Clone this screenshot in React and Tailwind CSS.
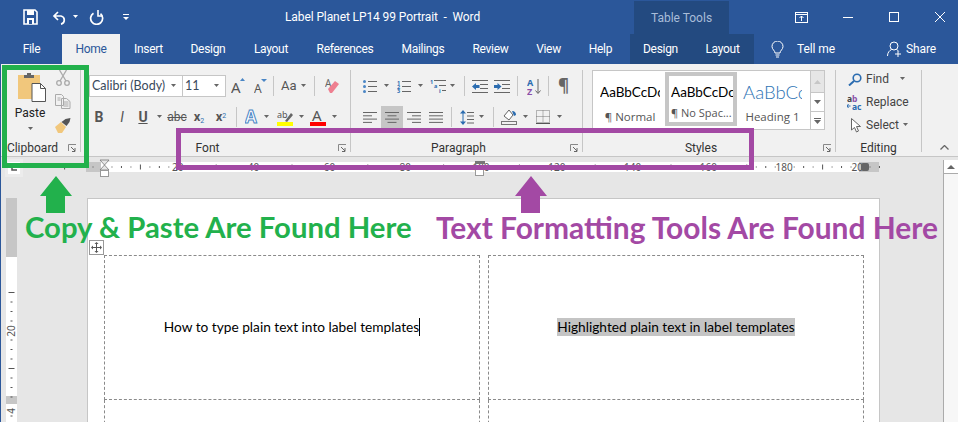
import React from "react";

const Caret = ({ className = "", color = "#666" }) => (
  <svg width="7" height="4" viewBox="0 0 7 4" className={"shrink-0 " + className}>
    <path d="M1 0h5L3.5 3z" fill={color} />
  </svg>
);
const Sep = ({ className = "" }) => <div className={"w-px h-[20px] shrink-0 bg-[#c6c6c6] " + className} />;

const Launcher = () => (
  <div className="w-[16px] flex justify-center shrink-0">
    <svg width="9" height="9" viewBox="0 0 9 9">
      <path d="M.5 7V.5H8" fill="none" stroke="#888" />
      <path d="M3 3l4 4M7 4v3.5H4" fill="none" stroke="#666" />
    </svg>
  </div>
);

const Group = ({ w, label, launcher = true, children }) => (
  <div className={"h-[82px] shrink-0 border-r border-[#c6c6c6] flex flex-col " + w}>
    <div className="h-[72px] shrink-0">{children}</div>
    <div className="h-[12px] shrink-0 flex items-center text-[12px] leading-[12px] text-[#333]">
      <span className="flex-1 text-center">{label}</span>
      {launcher && <Launcher />}
    </div>
  </div>
);

const Lines = ({ rows, className = "" }) => (
  <svg width="14" height="11" viewBox="0 0 14 11" className={"shrink-0 " + className}>
    {rows.map(([x, l], i) => (
      <rect key={i} x={x} y={i * 3.3} width={l} height="1" fill="#666" />
    ))}
  </svg>
);
const ALeft = [[0, 14], [0, 9], [0, 14], [0, 9]];
const ACenter = [[0, 14], [2.5, 9], [0, 14], [2.5, 9]];
const ARight = [[0, 14], [5, 9], [0, 14], [5, 9]];
const AJust = [[0, 14], [0, 14], [0, 14], [0, 14]];

const Tab = ({ w, children, active }) => (
  <div
    className={
      "h-[30px] flex items-center justify-center shrink-0 text-[12px] tracking-[-0.3px] " +
      w +
      (active ? " bg-[#f1f1f1] text-[#2b579a]" : " text-white")
    }
  >
    {children}
  </div>
);

function TitleBar() {
  return (
    <div className="h-[34px] flex items-center shrink-0">
      <svg width="15" height="16" viewBox="0 0 15 16" className="ml-[22px] shrink-0">
        <path d="M1 1h11l2 2v12H1z" fill="none" stroke="#fff" strokeWidth="1.6" />
        <rect x="4" y="1" width="7" height="5" fill="#fff" />
        <rect x="4" y="9" width="7" height="6" fill="#fff" />
        <rect x="6" y="11" width="3" height="4" fill="#2b579a" />
      </svg>
      <svg width="15" height="15" viewBox="0 0 15 15" className="ml-[14px] shrink-0">
        <path d="M6 2L2 6l4 4M2 6h7a4.2 4.2 0 0 1 0 8.2" fill="none" stroke="#fff" strokeWidth="1.7" />
      </svg>
      <Caret color="#fff" className="ml-[5px]" />
      <svg width="15" height="15" viewBox="0 0 15 15" className="ml-[10px] shrink-0">
        <path d="M4.5 3.2a6 6 0 1 0 7 .5" fill="none" stroke="#fff" strokeWidth="1.7" />
        <path d="M9 0v6h4.5" fill="none" stroke="#fff" strokeWidth="1.6" />
      </svg>
      <svg width="6" height="7" viewBox="0 0 6 7" className="ml-[19px] shrink-0">
        <rect y="0" width="6" height="1" fill="#fff" />
        <path d="M0 3h6L3 6z" fill="#fff" />
      </svg>
      <div className="ml-[156px] w-[349px] shrink-0 text-white text-[12px] tracking-[-0.1px] whitespace-pre">Label Planet LP14 99 Portrait  -  Word</div>
      <div className="w-[95px] h-[33px] mt-px self-start shrink-0 bg-[#234a80] text-[#a9bdd9] text-[12px] flex items-center justify-center">Table Tools</div>
      <svg width="13" height="11" viewBox="0 0 13 11" className="ml-[66px] shrink-0">
        <rect x=".5" y=".5" width="12" height="10" fill="none" stroke="#fff" />
        <path d="M0 2.5h13" stroke="#fff" />
        <path d="M6.5 9V4M4.5 6l2-2 2 2" fill="none" stroke="#fff" />
      </svg>
      <div className="ml-[35px] w-[10px] h-px bg-white shrink-0" />
      <div className="ml-[36px] w-[10px] h-[10px] border border-white shrink-0" />
      <svg width="10" height="10" viewBox="0 0 10 10" className="ml-[36px] shrink-0">
        <path d="M0 0l10 10M10 0L0 10" stroke="#fff" />
      </svg>
    </div>
  );
}

function TabBar() {
  return (
    <div className="h-[30px] flex items-center shrink-0">
      <Tab w="w-[61px]">File</Tab>
      <Tab w="w-[58px]" active>Home</Tab>
      <Tab w="w-[57px]">Insert</Tab>
      <Tab w="w-[62px]">Design</Tab>
      <Tab w="w-[64px]">Layout</Tab>
      <Tab w="w-[84px]">References</Tab>
      <Tab w="w-[72px]">Mailings</Tab>
      <Tab w="w-[63px]">Review</Tab>
      <Tab w="w-[53px]">View</Tab>
      <Tab w="w-[51px]">Help</Tab>
      <div className="w-[4px] shrink-0" />
      <div className="flex bg-[#234a80] shrink-0">
        <Tab w="w-[61px]">Design</Tab>
        <Tab w="w-[63px]">Layout</Tab>
      </div>
      <svg width="13" height="17" viewBox="0 0 13 17" className="ml-[17px] shrink-0">
        <path d="M4 12c0-2.500-3-3.500-3-6.500a5.500 5.500 0 0 1 11 0c0 3-3 4-3 6.500z" fill="none" stroke="#fff" />
        <path d="M4.500 14h4M5 16h3" stroke="#fff" />
      </svg>
      <span className="ml-[13px] w-[39px] shrink-0 whitespace-nowrap text-white text-[12px] tracking-[-0.1px]">Tell me</span>
      <svg width="15" height="16" viewBox="0 0 15 16" className="ml-[51px] shrink-0">
        <circle cx="7" cy="5" r="4" fill="none" stroke="#fff" />
        <path d="M.5 15c0-3.500 2-5.500 4-6.500M9.500 8.500c1 .4 1.600 1 2.200 1.800M8 13h6M11 10v6" fill="none" stroke="#fff" />
      </svg>
      <span className="ml-[4px] text-white text-[12px] tracking-[-0.1px]">Share</span>
    </div>
  );
}

function ClipboardGroup() {
  return (
    <Group w="w-[80px]" label="Clipboard">
      <div className="flex">
        <div className="w-[48px] ml-[5px] flex flex-col items-center shrink-0">
          <svg width="30" height="31" viewBox="0 0 30 31" className="mt-[2px] ml-[4px] shrink-0">
            <path d="M1 3h22v24H1z" fill="#f1c77c" />
            <path d="M7 6V3h3V1h4v2h3v3z" fill="#666" />
            <path d="M15 11.500h8.500l5 5v13H15z" fill="#fff" stroke="#555" />
            <path d="M23.500 11.500v5h5" fill="none" stroke="#555" />
          </svg>
          <span className="mt-[2px] text-[12px] leading-[16px] text-[#222]">Paste</span>
          <Caret className="mt-[6px]" />
        </div>
        <div className="w-[18px] flex flex-col items-center shrink-0">
          <svg width="14" height="16" viewBox="0 0 14 16" className="shrink-0">
            <circle cx="3" cy="13" r="2.300" fill="none" stroke="#aaa" strokeWidth="1.300" />
            <circle cx="11" cy="13" r="2.300" fill="none" stroke="#aaa" strokeWidth="1.300" />
            <path d="M4 11L10.500 0M10 11L3.500 0" stroke="#aaa" strokeWidth="1.300" />
          </svg>
          <svg width="16" height="15" viewBox="0 0 16 15" className="mt-[8px] shrink-0">
            <path d="M.5.500h6l2 2v9H.5zM6.500 4.500h5l3.500 3v7h-8.500z" fill="#f1f1f1" stroke="#aaa" />
            <path d="M2.500 4h3M2.500 6h3M8.500 8h5M8.500 10h5M8.500 12h5" stroke="#aaa" />
          </svg>
          <svg width="16" height="15" viewBox="0 0 16 15" className="mt-[9px] shrink-0">
            <path d="M0 9l6-5 5 5-4 6H3z" fill="#f1c77c" />
            <path d="M6.500 4l4-3 5-1-1 4-3 4z" fill="#555" />
          </svg>
        </div>
      </div>
    </Group>
  );
}

function FontGroup() {
  return (
    <Group w="w-[270px]" label="Font">
      <div className="flex items-center h-[22px] mt-[5px] ml-[8px]">
        <div className="w-[94px] h-[22px] bg-white border border-[#c6c6c6] flex items-center shrink-0 pl-[2px] text-[12.500px] font-['Lato',sans-serif]">
          <span className="flex-1 text-[#3a4a5c]">Calibri (Body)</span>
          <Caret className="mr-[5px]" />
        </div>
        <div className="w-[44px] h-[22px] -ml-px bg-white border border-[#c6c6c6] flex items-center shrink-0 pl-[2px] text-[12.500px] text-[#3a4a5c] font-['Lato',sans-serif]">
          <span className="flex-1">11</span>
          <Caret className="mr-[5px]" />
        </div>
        <svg width="15" height="16" viewBox="0 0 15 16" className="ml-[5px] shrink-0">
          <text x="0" y="15" fontSize="15" fill="#555" fontFamily="Noto Sans">A</text>
          <path d="M9 3l2.500-3L14 3z" fill="#4a86c5" />
        </svg>
        <svg width="13" height="15" viewBox="0 0 13 15" className="ml-[8px] shrink-0">
          <text x="0" y="14" fontSize="12" fill="#555" fontFamily="Noto Sans">A</text>
          <path d="M7 0h6l-3 3z" fill="#4a86c5" />
        </svg>
        <Sep className="ml-[6px]" />
        <span className="ml-[7px] w-[17px] text-[13px] text-[#555] shrink-0 leading-[16px]">Aa</span>
        <Caret className="ml-[2px]" />
        <Sep className="ml-[7px]" />
        <svg width="15" height="16" viewBox="0 0 15 16" className="ml-[10px] shrink-0">
          <text x="0" y="9" fontSize="10" fill="#666" fontFamily="Noto Sans">A</text>
          <path d="M3 11l7-8 4 3-7 9H5z" fill="#ee7f90" />
        </svg>
      </div>
      <div className="flex items-center h-[22px] mt-[9px] ml-[8px] text-[#555]">
        <span className="w-[20px] text-center text-[14px] font-bold shrink-0">B</span>
        <span className="w-[20px] ml-[3px] text-center text-[14px] italic shrink-0">I</span>
        <span className="w-[20px] ml-px text-center text-[14px] font-bold underline shrink-0">U</span>
        <Caret className="ml-[3px]" />
        <span className="w-[20px] ml-[4px] text-center text-[12px] line-through shrink-0">abc</span>
        <span className="w-[20px] ml-[2px] text-center text-[13px] font-bold shrink-0">x<sub className="text-[7px] text-[#2b6cb0] font-normal">2</sub></span>
        <span className="w-[20px] ml-[2px] text-center text-[13px] font-bold shrink-0">x<sup className="text-[7px] text-[#2b6cb0] font-normal">2</sup></span>
        <Sep className="ml-[5px]" />
        <svg width="14" height="16" viewBox="0 0 14 16" className="ml-[8px] shrink-0">
          <text x="0" y="14" fontSize="17" fontWeight="700" fill="#fff" stroke="#4a86c5" strokeWidth="1" fontFamily="Noto Sans">A</text>
        </svg>
        <Caret className="ml-[4px]" />
        <svg width="16" height="17" viewBox="0 0 16 17" className="ml-[7px] shrink-0">
          <text x="0" y="9" fontSize="9" fill="#555" fontFamily="Noto Sans">ab</text>
          <path d="M8 12l6-8 2 2-6 7z" fill="#666" />
          <rect y="13" width="16" height="4" fill="#ffff00" />
        </svg>
        <Caret className="ml-[5px]" />
        <svg width="16" height="17" viewBox="0 0 16 17" className="ml-[5px] shrink-0">
          <text x="2" y="12" fontSize="15" fill="#555" fontFamily="Noto Sans">A</text>
          <rect y="13" width="16" height="4" fill="#ff0000" />
        </svg>
        <Caret className="ml-[5px]" />
      </div>
    </Group>
  );
}

function ParagraphGroup() {
  return (
    <Group w="w-[232px]" label="Paragraph">
      <div className="flex items-center h-[22px] mt-[5px] ml-[12px]">
        <svg width="14" height="13" viewBox="0 0 14 13" className="shrink-0">
          <circle cx="1.500" cy="1.500" r="1.500" fill="#4a86c5" /><circle cx="1.500" cy="6.500" r="1.500" fill="#4a86c5" /><circle cx="1.500" cy="11.500" r="1.500" fill="#4a86c5" />
          <path d="M5 1.500h9M5 6.500h9M5 11.500h9" stroke="#666" />
        </svg>
        <Caret className="ml-[6px]" />
        <svg width="14" height="13" viewBox="0 0 14 13" className="ml-[7px] shrink-0">
          <text x="0" y="4.500" fontSize="5.500" fontWeight="700" fill="#2b6cb0" fontFamily="Noto Sans">1</text>
          <text x="0" y="9" fontSize="5.500" fontWeight="700" fill="#2b6cb0" fontFamily="Noto Sans">2</text>
          <text x="0" y="13" fontSize="5.500" fontWeight="700" fill="#2b6cb0" fontFamily="Noto Sans">3</text>
          <path d="M5 1.500h9M5 6.500h9M5 11.500h9" stroke="#666" />
        </svg>
        <Caret className="ml-[6px]" />
        <svg width="16" height="14" viewBox="0 0 16 14" className="ml-[6px] shrink-0">
          <text x="0" y="4.500" fontSize="5.500" fontWeight="700" fill="#2b6cb0" fontFamily="Noto Sans">1</text>
          <text x="4" y="9" fontSize="5.500" fontWeight="700" fill="#2b6cb0" fontFamily="Noto Sans">a</text>
          <text x="9" y="14" fontSize="5.500" fontWeight="700" fill="#2b6cb0" fontFamily="Noto Sans">i</text>
          <path d="M4 1.500h12M9 6.500h7M12 11.500h4" stroke="#666" />
        </svg>
        <Caret className="ml-[3px]" />
        <Sep className="ml-[8px]" />
        <svg width="16" height="13" viewBox="0 0 16 13" className="ml-[7px] shrink-0">
          <path d="M0 .5h16M8 4.500h8M8 8.500h8M0 12.500h16" stroke="#666" />
          <path d="M0 6.500L4 3v2h3.500v3H4v2z" fill="#2b6cb0" />
        </svg>
        <svg width="16" height="13" viewBox="0 0 16 13" className="ml-[6px] shrink-0">
          <path d="M0 .5h16M8 4.500h8M8 8.500h8M0 12.500h16" stroke="#666" />
          <path d="M7.500 6.500L3.500 3v2H0v3h3.500v2z" fill="#2b6cb0" />
        </svg>
        <Sep className="ml-[7px]" />
        <svg width="14" height="17" viewBox="0 0 14 17" className="ml-[9px] shrink-0">
          <text x="0" y="8" fontSize="9" fontWeight="700" fill="#2b6cb0" fontFamily="Noto Sans">A</text>
          <text x="0" y="16.500" fontSize="9" fontWeight="700" fill="#8a4fa8" fontFamily="Noto Sans">Z</text>
          <path d="M11 1v14M8.500 12.500L11 15.500l2.500-3" fill="none" stroke="#666" />
        </svg>
        <Sep className="ml-[7px]" />
        <span className="ml-[9px] w-[11px] text-[17px] leading-[20px] font-bold text-[#666] shrink-0 font-['Open_Sans',sans-serif]">¶</span>
      </div>
      <div className="flex items-center h-[22px] mt-[9px] ml-[12px]">
        <Lines rows={ALeft} />
        <div className="ml-[4px] w-[22px] h-[22px] bg-[#c6c6c6] flex items-center justify-center shrink-0"><Lines rows={ACenter} /></div>
        <Lines rows={ARight} className="ml-[4px]" />
        <Lines rows={AJust} className="ml-[8px]" />
        <Sep className="ml-[8px]" />
        <svg width="14" height="15" viewBox="0 0 14 15" className="ml-[8px] shrink-0">
          <path d="M3 2v11" stroke="#2b6cb0" />
          <path d="M0 3.500L3 0l3 3.500zM0 11.500L3 15l3-3.500z" fill="#2b6cb0" />
          <path d="M7 2.500h7M7 6h7M7 9.500h7M7 13h7" stroke="#666" />
        </svg>
        <Caret className="ml-[4px]" />
        <Sep className="ml-[8px]" />
        <svg width="16" height="16" viewBox="0 0 16 16" className="ml-[7px] shrink-0">
          <path d="M3 7l5-6 4 5-4 5z" fill="#fff" stroke="#666" />
          <path d="M11 2c3 0 4 2 4 4l-2 1z" fill="#2b6cb0" />
          <rect x=".5" y="12.500" width="15" height="3" fill="#f1f1f1" stroke="#777" />
        </svg>
        <Caret className="ml-[5px]" />
        <svg width="14" height="14" viewBox="0 0 14 14" className="ml-[7px] shrink-0">
          <path d="M.5.500h13v12H.5zM7 .5v12M.5 6.500h13" fill="none" stroke="#777" strokeDasharray="1 1" />
          <path d="M0 13.500h14" stroke="#555" />
        </svg>
        <Caret className="ml-[6px]" />
      </div>
    </Group>
  );
}

const styleLabel = "text-[#555] whitespace-nowrap leading-[18px] font-['Open_Sans',sans-serif] ";

function StylesGroup() {
  return (
    <Group w="w-[253px]" label="Styles">
      <div className="ml-[9px] w-[233px] h-[60px] bg-white border border-[#c6c6c6] flex">
        <div className="w-[72px] shrink-0 flex flex-col pl-[7px] pr-[5px] overflow-hidden">
          <span className="mt-[11px] h-[20px] leading-[20px] text-[13.500px] text-black whitespace-nowrap font-['Lato',sans-serif] overflow-hidden">AaBbCcDc</span>
          <span className={styleLabel + "mt-[6px] text-[11.500px] text-center"}>¶ Normal</span>
        </div>
        <div className="w-[72px] h-[54px] mt-px shrink-0 border-[4px] border-[#c6c6c6] flex flex-col pl-[2px] overflow-hidden">
          <span className="mt-[6px] h-[20px] leading-[20px] text-[13.500px] text-black whitespace-nowrap font-['Lato',sans-serif] overflow-hidden">AaBbCcDc</span>
          <span className={styleLabel + "mt-[5px] text-[11px]"}>¶ No Spac...</span>
        </div>
        <div className="w-[73px] shrink-0 flex flex-col pl-[6px] pr-[8px] overflow-hidden">
          <span className="mt-[8px] h-[26px] leading-[26px] text-[18.500px] font-light text-[#2e74b5] whitespace-nowrap font-['Lato',sans-serif] overflow-hidden">AaBbCc</span>
          <span className={styleLabel + "mt-[3px] text-[11.500px] text-center"}>Heading 1</span>
        </div>
        <div className="w-[14px] shrink-0 border-l border-[#c6c6c6] flex flex-col">
          <div className="h-[21px] bg-[#e6e6e6] flex items-center justify-center shrink-0">
            <svg width="7" height="4" viewBox="0 0 7 4"><path d="M0 4h7L3.500 0z" fill="#c6c6c6" /></svg>
          </div>
          <div className="h-[19px] border-t border-[#c6c6c6] flex items-center justify-center shrink-0">
            <svg width="7" height="4" viewBox="0 0 7 4"><path d="M0 0h7L3.500 4z" fill="#666" /></svg>
          </div>
          <div className="flex-1 border-t border-[#c6c6c6] flex flex-col items-center justify-center gap-px">
            <div className="w-[7px] h-px bg-[#666]" />
            <svg width="7" height="4" viewBox="0 0 7 4"><path d="M0 0h7L3.500 4z" fill="#666" /></svg>
          </div>
        </div>
      </div>
    </Group>
  );
}

function EditingGroup() {
  return (
    <Group w="w-[86px]" label="Editing" launcher={false}>
      <div className="flex flex-col gap-[5px] text-[12px] text-[#444]">
        <div className="h-[18px] flex items-center">
          <svg width="14" height="13" viewBox="0 0 14 13" className="ml-[12px] w-[14px] shrink-0">
            <circle cx="9" cy="5" r="3.800" fill="none" stroke="#2b6cb0" strokeWidth="1.600" />
            <path d="M6 8l-5 4.500" stroke="#2b6cb0" strokeWidth="2" />
          </svg>
          <span className="ml-[4px]">Find</span>
          <Caret className="ml-[10px]" />
        </div>
        <div className="h-[18px] flex items-center">
          <svg width="16" height="15" viewBox="0 0 16 15" className="ml-[11px] shrink-0">
            <text x="0" y="7" fontSize="8.500" fontWeight="700" fill="#444" fontFamily="Noto Sans">a<tspan fill="#8a4fa8">b</tspan></text>
            <text x="5" y="14.500" fontSize="8.500" fontWeight="700" fill="#2b6cb0" fontFamily="Noto Sans">ac</text>
            <path d="M0 11h3.500M1.500 9L0 11l1.500 2" fill="none" stroke="#2b6cb0" />
          </svg>
          <span className="ml-[3px]">Replace</span>
        </div>
        <div className="h-[18px] flex items-center">
          <svg width="10" height="15" viewBox="0 0 10 15" className="ml-[15px] shrink-0">
            <path d="M.5.500v11.500l3-2.500 2 4.500 2-1-2-4.500h4z" fill="#fff" stroke="#666" />
          </svg>
          <span className="ml-[5px]">Select</span>
          <Caret className="ml-[3px]" />
        </div>
      </div>
    </Group>
  );
}

const HRuler = () => {
  const z = 16;
  const step = 3.79;
  const dots = [];
  for (let i = -4; i <= 82; i++) {
    const x = z + i * 2.5 * step;
    if (i % 8 === 0) continue;
    if (i % 4 === 0) dots.push(<rect key={i} x={x} y="2.500" width="1" height="5" fill="#555" />);
    else dots.push(<rect key={i} x={x} y={i % 2 === 0 ? 4 : 4.500} width="1" height={i % 2 === 0 ? 2 : 1} fill="#555" />);
  }
  const nums = [20, 40, 60, 80, 100, 120, 140, 160, 180, 200];
  return (
    <svg width="793" height="10" viewBox="0 0 793 10" className="mt-[3px] ml-[63px] shrink-0 overflow-visible">
      <rect width="793" height="10" fill="#fff" />
      <rect width="15" height="10" fill="#c6c6c6" />
      <rect x="773" width="20" height="10" fill="#c6c6c6" />
      {dots}
      {nums.map((n) => (
        <text key={n} x={z + n * step} y="8.500" textAnchor="middle" fontSize="10" fill="#555" fontFamily="Noto Sans">{n}</text>
      ))}
      <path d="M14 -2h9l-4.500 5zM14 8h9l-4.500 -5z" fill="#e6e6e6" stroke="#777" strokeWidth=".8" />
      <rect x="14.500" y="8.500" width="8" height="6" fill="#fff" stroke="#999" />
      <rect x="389.500" y="7.500" width="8" height="6" fill="#fff" stroke="#999" />
      <rect x="389" y="-1" width="10" height="3" fill="#777" />
      <rect x="775" y="1" width="8" height="8" rx="2" fill="#666" />
    </svg>
  );
};

const VRuler = () => {
  const dots = [];
  for (let i = -4; i <= 16; i++) {
    const y = 132 + i * 9.500;
    if (i === 0 || i === 8) continue;
    if (y < 60) continue;
    dots.push(i % 4 === 0
      ? <rect key={i} x="2.500" y={y} width="6" height="1" fill="#555" />
      : <rect key={i} x="4.500" y={y} width="2" height="1" fill="#555" />);
  }
  return (
    <svg width="11" height="224" viewBox="0 0 11 224" className="ml-[5px] shrink-0">
      <rect width="11" height="224" fill="#fff" />
      <rect width="11" height="59" fill="#c6c6c6" />
      <rect y="198" width="11" height="8" fill="#c6c6c6" />
      {dots}
      <text transform="translate(8.500 133) rotate(-90)" textAnchor="middle" fontSize="10" fill="#555" fontFamily="Noto Sans">20</text>
      <text transform="translate(8.500 213) rotate(-90)" textAnchor="middle" fontSize="10" fill="#555" fontFamily="Noto Sans">4</text>
    </svg>
  );
};

const cellCls = "border-dashed border-[#8a8a8a] flex items-center justify-center";
const docText = "text-[13.700px] leading-[18px] text-black whitespace-nowrap font-['Lato',sans-serif]";

function Page() {
  return (
    <div className="ml-[70px] w-[793px] h-[224px] shrink-0 bg-white border-l border-r border-t border-[#c6c6c6] pl-[16px] pt-[56px] overflow-visible">
      <div className="relative w-[760px] grid grid-cols-[376px_376px] gap-x-[8px]">
        <div className="absolute -left-[15px] -top-[15px] w-[15px] h-[15px] border border-[#999] bg-white flex items-center justify-center">
          <svg width="11" height="11" viewBox="0 0 11 11">
            <path d="M5.500 1v9M1 5.500h9" stroke="#555" />
            <path d="M5.500 0l2 2h-4zM5.500 11l2-2h-4zM0 5.500l2-2v4zM11 5.500l-2-2v4z" fill="#555" />
          </svg>
        </div>
        <div className={cellCls + " h-[145px] border pb-[2px]"}>
          <span className={docText + " border-r border-black"}>How to type plain text into label templates</span>
        </div>
        <div className={cellCls + " h-[145px] border pb-[2px]"}>
          <span className={docText + " bg-[#c4c4c4]"}>Highlighted plain text in label templates</span>
        </div>
        <div className={cellCls + " h-[60px] border-l border-r border-b"} />
        <div className={cellCls + " h-[60px] border-l border-r border-b"} />
      </div>
    </div>
  );
}

const Arrow = ({ color, className }) => (
  <svg width="32" height="38" viewBox="0 0 32 38" className={"absolute " + className}>
    <path d="M16 0L32 20H25V37H6V20H0z" fill={color} />
  </svg>
);

export default function App() {
  return (
    <div className="relative w-[958px] h-[422px] overflow-hidden bg-[#2b579a] border-l border-[#2b579a] box-border flex flex-col font-['Roboto',sans-serif]">
      <TitleBar />
      <TabBar />
      <div className="h-[93px] shrink-0 bg-[#f1f1f1] border-b border-[#c6c6c6] pt-[6px] flex">
        <ClipboardGroup />
        <FontGroup />
        <ParagraphGroup />
        <StylesGroup />
        <EditingGroup />
        <div className="flex-1 flex items-end pl-[18px] pb-[2px] h-[82px]">
          <svg width="9" height="5" viewBox="0 0 9 5"><path d="M.5 4.500l4-4 4 4" fill="none" stroke="#666" strokeWidth="1.300" /></svg>
        </div>
      </div>
      <div className="flex-1 flex bg-[#e6e6e6] min-h-0">
        <div className="flex-1 flex flex-col min-w-0">
          <div className="h-[41px] shrink-0 flex items-start pt-[2px]">
            <div className="ml-[4px] w-[18px] h-[18px] shrink-0 bg-[#ececec] flex items-center justify-center">
              <div className="w-[12px] h-[12px] bg-white flex items-center justify-center">
                <svg width="6" height="6" viewBox="0 0 6 6"><path d="M1 0v5h5" fill="none" stroke="#555" strokeWidth="1.500" /></svg>
              </div>
            </div>
            <HRuler />
          </div>
          <div className="flex items-start">
            <VRuler />
            <Page />
          </div>
        </div>
        <div className="w-[15px] shrink-0 mt-[3px] bg-[#f7f7f7] border-l border-[#ababab] flex flex-col">
          <div className="h-[14px] bg-white border-b border-[#ababab] flex items-center justify-center">
            <svg width="8" height="4" viewBox="0 0 8 4"><path d="M0 4h8L4 0z" fill="#666" /></svg>
          </div>
        </div>
      </div>

      <div className="absolute left-[1px] top-[65px] w-[87px] h-[103px] border-[5px] border-[#22b14c]" />
      <div className="absolute left-[175px] top-[128px] w-[578px] h-[42px] border-[5px] border-[#a349a4]" />
      <Arrow color="#22b14c" className="left-[39px] top-[176px]" />
      <Arrow color="#a349a4" className="left-[514px] top-[176px]" />
      <div className="absolute left-[24px] top-[208px] text-[29.300px] leading-[38px] font-bold text-[#22b14c] whitespace-nowrap font-['Lato',sans-serif]">Copy &amp; Paste Are Found Here</div>
      <div className="absolute left-[435px] top-[208px] text-[29.900px] leading-[38px] font-bold text-[#a349a4] whitespace-nowrap font-['Lato',sans-serif]">Text Formatting Tools Are Found Here</div>
    </div>
  );
}
